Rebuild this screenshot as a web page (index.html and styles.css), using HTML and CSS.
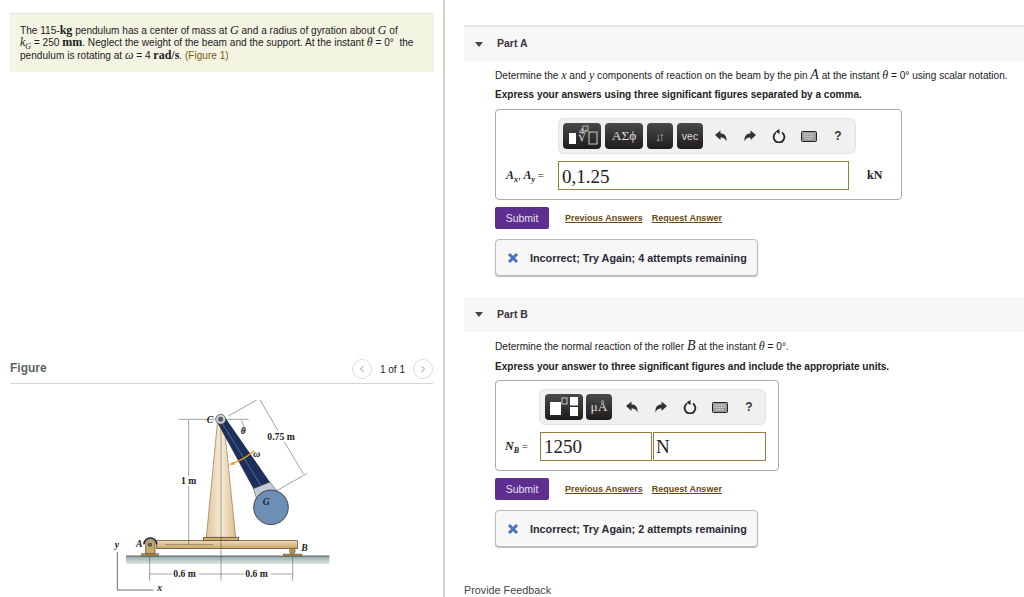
FILE: index.html
```html
<!DOCTYPE html>
<html lang="en">
<head>
<meta charset="utf-8">
<title>Pendulum problem</title>
<link rel="stylesheet" href="styles.css">
</head>
<body>
<main class="page">
  <section class="left">
    <div class="problem">
      <div class="pline">The 115-<span class="unit">kg</span> pendulum has a center of mass at <i class="m">G</i> and a radius of gyration about <i class="m">G</i> of</div>
      <div class="pline"><i class="m">k<sub>G</sub></i> = 250 <span class="unit">mm</span>. Neglect the weight of the beam and the support. At the instant <i class="m">θ</i> = 0° &nbsp;the</div>
      <div class="pline">pendulum is rotating at <i class="m">ω</i> = 4 <span class="unit">rad/s</span>. <span class="figlink">(Figure 1)</span></div>
    </div>
    <div class="fighead">
      <span class="figtitle">Figure</span>
      <div class="pager">
        <span class="pagebtn"><svg viewBox="0 0 10 10" width="10" height="10"><path d="M6.500 2 3.500 5l3 3" fill="none" stroke="#999" stroke-width="1"/></svg></span>
        <span class="pagetxt">1 of 1</span>
        <span class="pagebtn"><svg viewBox="0 0 10 10" width="10" height="10"><path d="M3.500 2l3 3-3 3" fill="none" stroke="#999" stroke-width="1"/></svg></span>
      </div>
    </div>
    <svg class="diagram" viewBox="0 0 720 591" width="240" height="197">
      <defs>
        <linearGradient id="col" x1="0" x2="1" y1="0" y2="0"><stop offset="0" stop-color="#dfc49a"/><stop offset=".5" stop-color="#f8ecd6"/><stop offset="1" stop-color="#dcbd8e"/></linearGradient>
        <linearGradient id="gnd" x1="0" x2="0" y1="0" y2="1"><stop offset="0" stop-color="#93a8a8"/><stop offset="1" stop-color="#dfe6e6"/></linearGradient>
        <linearGradient id="beam" x1="0" x2="0" y1="0" y2="1"><stop offset="0" stop-color="#f0dcb4"/><stop offset="1" stop-color="#c9a56c"/></linearGradient>
      </defs>
      <rect x="78" y="468" width="610" height="24" fill="url(#gnd)"/>
      <line x1="78" y1="468" x2="688" y2="468" stroke="#222" stroke-width="2"/>
      <rect x="170" y="422" width="422" height="24" fill="url(#beam)" stroke="#4a3a20" stroke-width="2"/>
      <line x1="195" y1="434" x2="340" y2="434" stroke="#a98d5e" stroke-width="3"/>
      <polygon points="352,70 372,70 407,412 319,412" fill="url(#col)" stroke="#6a5330" stroke-width="1.500"/>
      <rect x="311" y="412" width="105" height="10" fill="#d3b078" stroke="#4a3a20" stroke-width="2"/>
      <rect x="125" y="461" width="51" height="7" fill="#a98a50" stroke="#333"/>
      <path d="M137 461v-28a14 14 0 0 1 28 0v28z" fill="#c9a86e" stroke="#4a3a20" stroke-width="2"/>
      <path d="M132 433a19 19 0 0 1 38 0" fill="none" stroke="#223" stroke-width="5"/>
      <circle cx="150" cy="434" r="5" fill="#777" stroke="#222" stroke-width="2"/>
      <circle cx="577" cy="453" r="9" fill="#b99440" stroke="#333"/>
      <rect x="550" y="462" width="56" height="6" fill="#a98a50" stroke="#333"/>
      <polygon points="352,66 374,52 510,248 462,268" fill="#1c2f5c" stroke="#111" stroke-width="1.500"/>
      <line x1="364" y1="66" x2="485" y2="260" stroke="#6f86b0" stroke-width="2"/>
      <polygon points="460,266 510,246 530,272 472,304" fill="#c3ccd4" stroke="#444" stroke-width="1.500"/>
      <circle cx="513" cy="322" r="52" fill="#6d8fb5" stroke="#111" stroke-width="2"/>
      <circle cx="362" cy="58" r="15" fill="#c9ced2" stroke="#444" stroke-width="2"/>
      <circle cx="362" cy="58" r="6" fill="#666" stroke="#222" stroke-width="2"/>
      <path d="M392 192 Q435 178 462 152" fill="none" stroke="#e79a1e" stroke-width="4"/>
      <path d="M388 194l14-8 2 8z" fill="#e79a1e"/>
      <g class="dim">
        <line x1="236" y1="58" x2="345" y2="58"/>
        <line x1="378" y1="58" x2="446" y2="58"/>
        <line x1="266" y1="60" x2="266" y2="228"/>
        <line x1="266" y1="258" x2="266" y2="434"/>
        <line x1="385" y1="48" x2="470" y2="0"/>
        <line x1="480" y1="0" x2="534" y2="92"/>
        <line x1="553" y1="125" x2="610" y2="222"/>
        <line x1="530" y1="272" x2="622" y2="220"/>
        <path d="M425 62q10 18 5 36"/>
        <line x1="408" y1="108" x2="398" y2="112"/>
        <line x1="363" y1="70" x2="363" y2="542"/>
        <line x1="149" y1="470" x2="149" y2="542"/>
        <line x1="578" y1="470" x2="578" y2="542"/>
        <line x1="149" y1="522" x2="216" y2="522"/>
        <line x1="296" y1="522" x2="363" y2="522"/>
        <line x1="363" y1="522" x2="432" y2="522"/>
        <line x1="512" y1="522" x2="578" y2="522"/>
      </g>
      <path class="axis" d="M52 456V570H160"/>
      <text class="lbl it" x="320" y="68">C</text>
      <text class="lbl it" x="422" y="102">θ</text>
      <text class="lbl" x="502" y="120">0.75 m</text>
      <text class="lbl it" x="460" y="172">ω</text>
      <text class="lbl it" x="488" y="316">G</text>
      <text class="lbl" x="243" y="252">1 m</text>
      <text class="lbl it" x="108" y="442">A</text>
      <text class="lbl it" x="604" y="454">B</text>
      <text class="lbl it" x="44" y="444">y</text>
      <text class="lbl it" x="172" y="574">x</text>
      <text class="lbl" x="220" y="532">0.6 m</text>
      <text class="lbl" x="436" y="532">0.6 m</text>
    </svg>
  </section>

  <section class="right">
    <header class="parthead parthead-a">
      <span class="caret"></span><h2 class="parttitle">Part A</h2>
    </header>
    <div class="partbody">
      <p class="q">Determine the <i class="m">x</i> and <i class="m">y</i> components of reaction on the beam by the pin <i class="m big">A</i> at the instant <i class="m">θ</i> = 0° using scalar notation.</p>
      <p class="hint">Express your answers using three significant figures separated by a comma.</p>
      <div class="answer answer-a">
        <div class="toolbar toolbar-a">
          <span class="tbtn w38"><svg viewBox="0 0 38 26" width="38" height="26"><rect x="6" y="10" width="7" height="11" fill="#fff"/><text x="15" y="18" class="ico">∜</text><rect x="26" y="9" width="8" height="12" fill="none" stroke="#ccc"/><rect x="20" y="3" width="5" height="5" fill="none" stroke="#ccc" stroke-width=".8"/></svg></span>
          <span class="tbtn w38 serif">ΑΣϕ</span>
          <span class="tbtn w25 arrows">↓↑</span>
          <span class="tbtn w25 sans">vec</span>
          <span class="tools">
            <svg class="tool" viewBox="0 0 14 14" width="14" height="14"><path d="M1 6 6.500 1.500v3c4 0 6.500 2.500 6 8-1.500-3-2.500-4-6-4V11z" fill="#333"/></svg>
            <svg class="tool" viewBox="0 0 14 14" width="14" height="14"><path d="M13 6 7.500 1.500v3c-4 0-6.500 2.500-6 8 1.500-3 2.500-4 6-4V11z" fill="#333"/></svg>
            <svg class="tool" viewBox="0 0 14 14" width="14" height="14"><path d="M4 3.500a5.400 5.400 0 1 0 6 0" fill="none" stroke="#222" stroke-width="1.800"/><path d="M7.500 0v5l-4-2.500z" fill="#222"/></svg>
            <svg class="tool kb" viewBox="0 0 16 11" width="16" height="11"><rect x=".5" y=".5" width="15" height="10" rx="1" fill="#999" stroke="#222"/><path d="M2.500 3h11M2.500 5.200h11M4 7.800h8" stroke="#eee" stroke-width="1.100" stroke-dasharray="1 .6"/></svg>
            <span class="help">?</span>
          </span>
        </div>
        <div class="inputrow">
          <span class="alabel alabel-a"><i class="mb">A<sub>x</sub></i>, <i class="mb">A<sub>y</sub></i> =</span>
          <span class="field field-a">0,1.25</span>
          <span class="aunit">kN</span>
        </div>
      </div>
      <div class="actions">
        <span class="submit">Submit</span>
        <span class="link link-first">Previous Answers</span>
        <span class="link">Request Answer</span>
      </div>
      <div class="feedback">
        <svg viewBox="0 0 12 12" width="12" height="12"><path d="M2 2l8 8M10 2l-8 8" stroke="#4a72c4" stroke-width="3"/></svg>
        <span>Incorrect; Try Again; 4 attempts remaining</span>
      </div>
    </div>

    <header class="parthead parthead-b">
      <span class="caret"></span><h2 class="parttitle">Part B</h2>
    </header>
    <div class="partbody">
      <p class="q">Determine the normal reaction of the roller <i class="m big">B</i> at the instant <i class="m">θ</i> = 0°.</p>
      <p class="hint hint-b">Express your answer to three significant figures and include the appropriate units.</p>
      <div class="answer answer-b">
        <div class="toolbar toolbar-b">
          <span class="tbtn w38"><svg viewBox="0 0 38 26" width="38" height="26"><rect x="5" y="8" width="11" height="13" fill="#fff"/><rect x="17" y="4" width="5" height="6" fill="none" stroke="#ccc"/><rect x="25" y="3" width="8" height="8.500" fill="#fff"/><rect x="25" y="13" width="8" height="9" fill="#fff"/></svg></span>
          <span class="tbtn w25 serif">μÅ</span>
          <span class="tools tools-b">
            <svg class="tool" viewBox="0 0 14 14" width="14" height="14"><path d="M1 6 6.500 1.500v3c4 0 6.500 2.500 6 8-1.500-3-2.500-4-6-4V11z" fill="#333"/></svg>
            <svg class="tool" viewBox="0 0 14 14" width="14" height="14"><path d="M13 6 7.500 1.500v3c-4 0-6.500 2.500-6 8 1.500-3 2.500-4 6-4V11z" fill="#333"/></svg>
            <svg class="tool" viewBox="0 0 14 14" width="14" height="14"><path d="M4 3.500a5.400 5.400 0 1 0 6 0" fill="none" stroke="#222" stroke-width="1.800"/><path d="M7.500 0v5l-4-2.500z" fill="#222"/></svg>
            <svg class="tool kb" viewBox="0 0 16 11" width="16" height="11"><rect x=".5" y=".5" width="15" height="10" rx="1" fill="#999" stroke="#222"/><path d="M2.500 3h11M2.500 5.200h11M4 7.800h8" stroke="#eee" stroke-width="1.100" stroke-dasharray="1 .6"/></svg>
            <span class="help">?</span>
          </span>
        </div>
        <div class="inputrow">
          <span class="alabel alabel-b"><i class="mb">N<sub>B</sub></i> =</span>
          <span class="field field-b">1250</span>
          <span class="field field-n">N</span>
        </div>
      </div>
      <div class="actions">
        <span class="submit">Submit</span>
        <span class="link link-first">Previous Answers</span>
        <span class="link">Request Answer</span>
      </div>
      <div class="feedback">
        <svg viewBox="0 0 12 12" width="12" height="12"><path d="M2 2l8 8M10 2l-8 8" stroke="#4a72c4" stroke-width="3"/></svg>
        <span>Incorrect; Try Again; 2 attempts remaining</span>
      </div>
    </div>
    <p class="provide">Provide Feedback</p>
  </section>
</main>
</body>
</html>
```
FILE: styles.css
```css
* { box-sizing: border-box; }
html, body { margin: 0; padding: 0; background: #fff; }
body { width: 1024px; height: 597px; overflow: hidden; font-family: "Liberation Sans", Arial, sans-serif; color: #222; }
.page { display: flex; height: 597px; }

.left { width: 445px; height: 597px; flex: none; padding: 13px 0 0 10px; border-right: 2px solid #d8cfc4; }
.problem { width: 424px; height: 59px; padding: 10.500px 10px 0; background: #f4f4e3; border-top: 1px solid #e4e4d4; font-size: 10.100px; color: #222; white-space: nowrap; }
.pline { height: 12.700px; line-height: 12.700px; }
.m { font-family: "Liberation Serif", serif; font-style: italic; font-size: 12px; line-height: 0; }
.m.big { font-size: 14px; }
.m sub, .mb sub { font-size: 8px; line-height: 0; }
.unit { font-family: "Liberation Serif", serif; font-size: 12px; font-weight: 700; line-height: 0; }
.figlink { color: #7a5c10; }
.fighead { width: 423px; height: 34px; margin-top: 278px; display: flex; justify-content: space-between; align-items: flex-end; border-bottom: 1px solid #d5d5d5; padding-bottom: 4px; }
.figtitle { font-size: 12px; font-weight: 700; color: #5b6660; margin-bottom: 4px; }
.pager { display: flex; align-items: center; gap: 8px; font-size: 10px; color: #222; }
.pagebtn { width: 20px; height: 20px; display: flex; align-items: center; justify-content: center; border: 1px solid #ddd; border-radius: 50%; }
.diagram { display: block; margin: 16px 0 0 90px; }
.dim line, .dim path { stroke: #444; stroke-width: 1.500; fill: none; }
.axis { stroke: #222; stroke-width: 2; fill: none; }
.lbl { font-family: "Liberation Serif", serif; font-size: 29px; font-weight: 700; fill: #222; }
.it { font-style: italic; }

.right { flex: 1; min-width: 0; padding: 25px 0 0 19px; }
.parthead { height: 36px; background: #f7f7f7; display: flex; align-items: center; padding-left: 11px; }
.parthead-a { border-top: 2px solid #e6e6e6; }
.parthead-b { margin-top: 21px; height: 35px; }
.caret { width: 0; height: 0; border-left: 4px solid transparent; border-right: 4px solid transparent; border-top: 5px solid #444; }
.parttitle { margin: 0 0 2px 14px; font-size: 10.500px; font-weight: 700; color: #3a3340; }
.partbody { padding-left: 31px; }
.q { margin: 0; padding-top: 8px; height: 26px; font-size: 10.100px; line-height: 14px; color: #222; white-space: nowrap; }
.hint { margin: 0; padding-top: 1px; height: 22px; font-size: 10.050px; line-height: 14px; font-weight: 700; color: #222; white-space: nowrap; }
.hint-b { padding-top: 2px; }
.answer { border: 1px solid #aaa; border-radius: 4px; }
.answer-a { width: 407px; height: 91px; padding: 8px 0 0 62px; }
.answer-b { width: 284px; height: 91px; padding: 8px 0 0 43px; }
.toolbar { display: flex; align-items: center; height: 36px; background: #f0f0f0; border: 1px solid #e2e2e2; border-radius: 6px; padding-left: 4px; gap: 4px; }
.toolbar-a { width: 298px; }
.toolbar-b { width: 227px; padding-left: 5px; gap: 3px; }
.tbtn { height: 26px; display: flex; align-items: center; justify-content: center; border-radius: 4px; background: linear-gradient(#4a4a4a, #1f1b1b); color: #ddd; font-size: 11px; }
.w38 { width: 38px; }
.w25 { width: 26px; }
.serif { font-family: "Liberation Serif", serif; font-size: 13.500px; }
.sans { font-size: 10.500px; }
.arrows { font-size: 13px; letter-spacing: -3px; padding-right: 3px; font-family: "Liberation Sans", sans-serif; color: #bbb; }
.ico { font-size: 14px; fill: #ccc; font-family: "DejaVu Sans", sans-serif; }
.tools { display: flex; align-items: center; margin-left: 7px; gap: 15px; }
.tools-b { margin-left: 10px; }
.tool { flex: none; }
.help { font-size: 12px; font-weight: 700; color: #333; width: 14px; text-align: center; margin-left: -1px; }
.inputrow { display: flex; align-items: center; margin-top: 7px; }
.alabel { font-family: "Liberation Serif", serif; font-size: 11px; white-space: nowrap; margin-left: -52px; width: 52px; }
.alabel-b { margin-left: -34px; width: 35px; }
.mb { font-family: "Liberation Serif", serif; font-style: italic; font-weight: 700; font-size: 12px; }
.field { height: 29px; display: flex; align-items: center; padding-left: 3px; font-family: "Liberation Serif", serif; font-size: 19px; color: #222; background: #fff; border: 1px solid #9a7d3a; }
.field-a { width: 291px; padding-top: 2px; }
.aunit { margin-left: 18px; font-family: "Liberation Serif", serif; font-weight: 700; font-size: 12px; }
.field-b { width: 112px; }
.field-n { width: 113px; margin-left: 1px; padding-left: 2px; }
.actions { display: flex; align-items: center; height: 22px; margin-top: 7px; }
.submit { width: 54px; height: 22px; display: flex; align-items: center; justify-content: center; background: #5f2e91; color: #e6e0ee; border-radius: 2px; font-size: 10.500px; }
.link { font-size: 9px; font-weight: 700; color: #6a4a10; text-decoration: underline; margin-left: 9px; white-space: nowrap; }
.link-first { margin-left: 16px; }
.feedback { width: 263px; height: 37px; margin-top: 10px; display: flex; align-items: center; gap: 11px; padding-left: 11px; background: #f7f7f7; border: 1px solid #bbb; border-radius: 4px; box-shadow: 0 1px 1px #bbb; font-size: 10.800px; font-weight: 700; color: #2a2a35; white-space: nowrap; }
.provide { margin: 37px 0 0; font-size: 10.800px; line-height: 12px; color: #444; }
```
